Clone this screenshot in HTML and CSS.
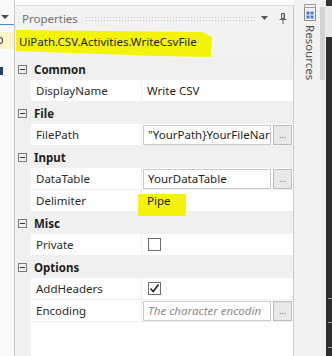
FILE: index.html
```html
<!DOCTYPE html>
<html>
<head>
<meta charset="utf-8">
<link rel="stylesheet" href="styles.css">
</head>
<body>
<div class="screen">
  <div class="lstrip">
    <div class="l-arrow"></div>
    <div class="l-blue"></div>
    <div class="l-yel"></div>
    <div class="l-navy"></div>
  </div>
  <div class="props">
    <div class="titlebar">
      <span class="title">Properties</span>
      <span class="grip"></span>
      <svg class="ddarrow" width="7" height="4" viewBox="0 0 7 4"><path d="M0 0h7L3.5 4z" fill="#555"/></svg>
      <svg class="pin" width="8" height="11" viewBox="0 0 8 11"><path d="M2.5 0.5h3v5h-3z" fill="none" stroke="#5a5a5a"/><path d="M5 1v5" stroke="#5a5a5a"/><path d="M0.5 6.5h7M4 7v4" stroke="#5a5a5a"/></svg>
    </div>
    <div class="typename"><span class="hl-type"></span><span class="tn">UiPath.CSV.Activities.WriteCsvFile</span></div>
    <div class="spacer"></div>
    <div class="grid">
      <div class="cat"><span class="exp"></span><span class="catname">Common</span></div>
      <div class="prop"><div class="name">DisplayName</div><div class="val">Write CSV</div></div>
      <div class="cat"><span class="exp"></span><span class="catname">File</span></div>
      <div class="prop"><div class="name">FilePath</div><div class="val tbval"><div class="tb">"YourPath}YourFileNar</div><div class="btn">...</div></div></div>
      <div class="cat"><span class="exp"></span><span class="catname">Input</span></div>
      <div class="prop"><div class="name">DataTable</div><div class="val tbval"><div class="tb">YourDataTable</div><div class="btn">...</div></div></div>
      <div class="prop"><div class="name">Delimiter</div><div class="val hlval"><span class="hl-pipe"></span><span class="pipe">Pipe</span></div></div>
      <div class="cat"><span class="exp"></span><span class="catname">Misc</span></div>
      <div class="prop"><div class="name">Private</div><div class="val"><span class="cb"></span></div></div>
      <div class="cat"><span class="exp"></span><span class="catname">Options</span></div>
      <div class="prop"><div class="name">AddHeaders</div><div class="val"><span class="cb"><svg width="11" height="11" viewBox="0 0 11 11"><path d="M1.5 5.5l2.8 3L9.5 1.5" fill="none" stroke="#222" stroke-width="1.6"/></svg></span></div></div>
      <div class="prop"><div class="name">Encoding</div><div class="val tbval"><div class="tb ph">The character encodin</div><div class="btn">...</div></div></div>
    </div>
  </div>
  <div class="tabs">
    <div class="tab">
      <svg class="resicon" width="14" height="17" viewBox="0 0 14 17">
        <path d="M1.5 3.5v13h11v-13" fill="none" stroke="#8a8a8a"/>
        <path d="M1.5 0.5h11v3h-11z" fill="none" stroke="#9a9a9a"/>
        <rect x="3.5" y="7.5" width="3" height="3" fill="#3d7fd6"/>
        <rect x="7.5" y="7.5" width="3" height="3" fill="#3d7fd6"/>
        <rect x="3.5" y="11.5" width="3" height="3" fill="#3d7fd6"/>
        <rect x="7.5" y="11.5" width="3" height="3" fill="#3d7fd6"/>
      </svg>
      <span class="tabtext">Resources</span>
    </div>
  </div>
  <div class="edge">
    <div class="sb"><div class="thumb"></div></div>
    <div class="dk">
      <div class="dk-top"></div>
      <div class="dk-light"></div>
      <div class="dk-main"><span class="tick t1"></span><span class="tick t2"></span><span class="tick t3"></span></div>
    </div>
  </div>
</div>
</body>
</html>
```
FILE: styles.css
```css
html, body {
  margin: 0;
  padding: 0;
}
body {
  width: 332px;
  height: 356px;
  overflow: hidden;
  background: #ffffff;
  font-family: "Noto Sans", "Open Sans", sans-serif;
  font-size: 11.5px;
  color: #1e1e1e;
}
.screen {
  display: flex;
  height: 356px;
}

/* left cropped panel */
.lstrip {
  width: 14px;
  flex: none;
  border-right: 1px solid #c9c9c9;
  background: #fafafa;
  display: flex;
  flex-direction: column;
  overflow: hidden;
}
.l-arrow {
  margin-top: 15px;
  margin-left: 1px;
  width: 0;
  height: 0;
  border-left: 4px solid transparent;
  border-right: 4px solid transparent;
  border-top: 4px solid #4a4a4a;
}
.l-blue {
  margin-top: 5px;
  height: 1px;
  background: #3c8fd6;
}
.l-yel {
  margin-top: 7px;
  height: 17px;
  background: #fbf4cc;
  position: relative;
}
.l-yel::after {
  content: "";
  position: absolute;
  left: 0;
  top: 5px;
  width: 3px;
  height: 7px;
  border: 1px solid #444;
  border-left: none;
  border-radius: 0 4px 4px 0;
  box-sizing: border-box;
}
.l-navy {
  margin-top: 18px;
  width: 3px;
  height: 8px;
  background: #25407a;
}

/* properties panel */
.props {
  width: 278px;
  flex: none;
  margin-top: 5px;
  border-top: 1px solid #dedede;
  border-right: 1px solid #cccccc;
  background: #f2f2f2;
  display: flex;
  flex-direction: column;
}
.titlebar {
  height: 24px;
  display: flex;
  align-items: center;
  padding-left: 7px;
  padding-right: 5px;
}
.title {
  color: #717171;
}
.grip {
  flex: 1;
  height: 5px;
  margin: 0 5px 0 7px;
  background-image: radial-gradient(circle, #c4c4c4 0.7px, transparent 0.9px);
  background-size: 3px 3px;
}
.ddarrow {
  margin-right: 11px;
}
.pin {
  margin-right: 1px;
}
.typename {
  height: 22px;
  position: relative;
  display: flex;
  align-items: center;
  padding-left: 4px;
}
.hl-type {
  position: absolute;
  left: 1px;
  top: 0;
  width: 197px;
  height: 28px;
  background: #f3f30c;
  clip-path: polygon(0 0, 186px 2px, 196px 7px, 195px 27px, 140px 26px, 0 21px);
}
.tn {
  position: relative;
}
.spacer {
  height: 6px;
}
.grid {
  flex: 1;
  display: flex;
  flex-direction: column;
  background: linear-gradient(to right, #f0f0f0 16px, #ffffff 16px);
}
.cat {
  height: 22px;
  display: flex;
  align-items: center;
  background: #f0f0f0;
}
.exp {
  margin-left: 3px;
  width: 9px;
  height: 9px;
  box-sizing: border-box;
  border: 1px solid #7a7a7a;
  background: linear-gradient(#333, #333) center / 5px 1px no-repeat;
}
.catname {
  margin-left: 7px;
  font-weight: bold;
}
.prop {
  height: 22px;
  box-sizing: border-box;
  padding-left: 16px;
  padding-bottom: 1px;
  display: flex;
  gap: 1px;
  background: #f0f0f0;
}
.name {
  width: 110px;
  flex: none;
  background: #ffffff;
  padding-left: 5px;
  box-sizing: border-box;
  line-height: 21px;
  color: #2a2a2a;
}
.val {
  flex: 1;
  background: #ffffff;
  display: flex;
  align-items: center;
  padding-left: 5px;
  white-space: nowrap;
}
.tbval {
  padding-left: 1px;
}
.tb {
  width: 128px;
  height: 20px;
  flex: none;
  box-sizing: border-box;
  border: 1px solid #cacaca;
  background: #ffffff;
  padding-left: 4px;
  line-height: 18px;
  overflow: hidden;
  white-space: nowrap;
}
.tb.ph {
  font-style: italic;
  color: #8c8c8c;
}
.btn {
  width: 19px;
  height: 20px;
  flex: none;
  box-sizing: border-box;
  margin-left: 2px;
  border: 1px solid #bcbcbc;
  background: #e9e9e9;
  color: #707070;
  font-size: 9px;
  line-height: 18px;
  text-align: center;
}
.hlval {
  position: relative;
}
.hl-pipe {
  position: absolute;
  left: -4px;
  top: 4px;
  width: 48px;
  height: 22px;
  background: #f3f30c;
  z-index: 1;
}
.pipe {
  position: relative;
  z-index: 2;
}
.cb {
  width: 13px;
  height: 13px;
  box-sizing: border-box;
  margin-left: 1px;
  border: 1px solid #6e6e6e;
  background: #ffffff;
  display: flex;
  align-items: center;
  justify-content: center;
}

/* side tab */
.tabs {
  width: 26px;
  flex: none;
  background: #f2f2f2;
}
.tab {
  margin-left: 9px;
  padding-top: 4px;
  display: flex;
  flex-direction: column;
  align-items: center;
  width: 14px;
}
.tabtext {
  writing-mode: vertical-rl;
  margin-top: 4px;
  color: #505050;
  font-size: 11.5px;
}

/* right edge */
.edge {
  width: 12px;
  flex: none;
  display: flex;
}
.sb {
  width: 6px;
  background: #f0f0f0;
  padding-top: 7px;
}
.thumb {
  width: 5px;
  height: 73px;
  background: #d2d2d2;
}
.dk {
  width: 6px;
  display: flex;
  flex-direction: column;
}
.dk-top {
  height: 6px;
  background: #333333;
}
.dk-light {
  height: 31px;
  background: #e8e8e8;
}
.dk-main {
  flex: 1;
  background: #2d2d30;
  position: relative;
}
.tick {
  position: absolute;
  left: 2px;
  width: 4px;
  height: 1px;
  background: #9a9a9a;
}
.t1 { top: 261px; }
.t2 { top: 285px; }
.t3 { top: 310px; }
```
